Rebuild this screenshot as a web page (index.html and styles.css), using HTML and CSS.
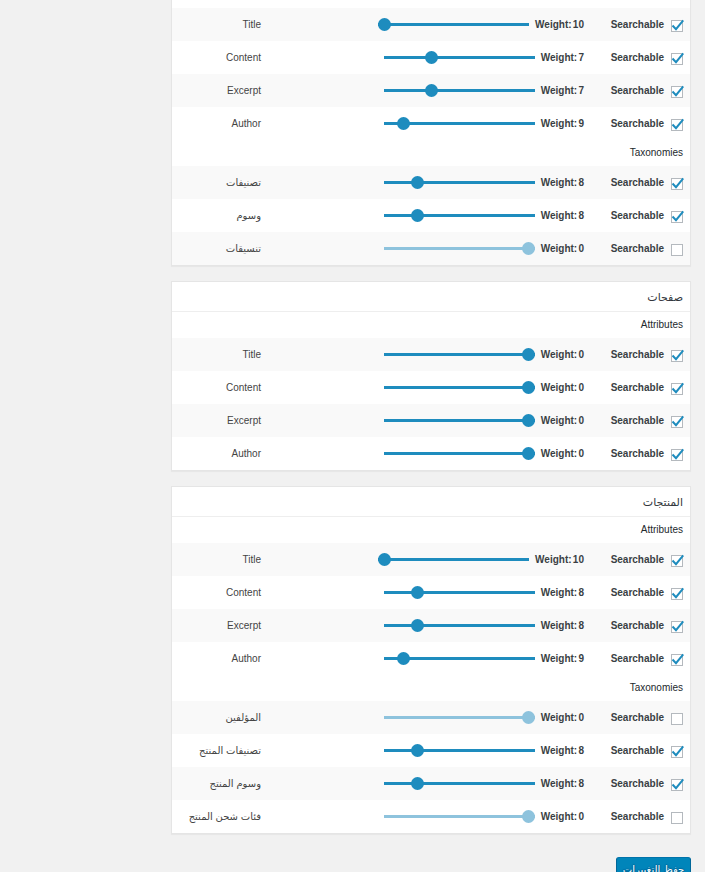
FILE: index.html
```html
<!DOCTYPE html>
<html lang="ar" dir="rtl">
<head>
<meta charset="utf-8">
<title>Search settings</title>
<link rel="stylesheet" href="styles.css">
</head>
<body>
<div class="wrap">
  <div class="panels">
    <section class="panel first">
      <h2 class="panel-title">مقالات</h2>
      <div class="group-label">Attributes</div>
      <div class="row">
        <label class="c-search"><span class="cb on"><svg viewBox="0 0 12 12" width="12" height="12"><path d="M2.2 6.2 L5 9.2 L11.6 1.2"/></svg></span><span class="s-text">Searchable</span></label>
        <div class="c-weight"><span class="w-text">Weight: 10</span><input class="slider" type="range" min="0" max="10" value="10"></div>
        <div class="c-label">Title</div>
      </div>
      <div class="row">
        <label class="c-search"><span class="cb on"><svg viewBox="0 0 12 12" width="12" height="12"><path d="M2.2 6.2 L5 9.2 L11.6 1.2"/></svg></span><span class="s-text">Searchable</span></label>
        <div class="c-weight"><span class="w-text">Weight: 7</span><input class="slider" type="range" min="0" max="10" value="7"></div>
        <div class="c-label">Content</div>
      </div>
      <div class="row">
        <label class="c-search"><span class="cb on"><svg viewBox="0 0 12 12" width="12" height="12"><path d="M2.2 6.2 L5 9.2 L11.6 1.2"/></svg></span><span class="s-text">Searchable</span></label>
        <div class="c-weight"><span class="w-text">Weight: 7</span><input class="slider" type="range" min="0" max="10" value="7"></div>
        <div class="c-label">Excerpt</div>
      </div>
      <div class="row">
        <label class="c-search"><span class="cb on"><svg viewBox="0 0 12 12" width="12" height="12"><path d="M2.2 6.2 L5 9.2 L11.6 1.2"/></svg></span><span class="s-text">Searchable</span></label>
        <div class="c-weight"><span class="w-text">Weight: 9</span><input class="slider" type="range" min="0" max="10" value="9"></div>
        <div class="c-label">Author</div>
      </div>
      <div class="group-label">Taxonomies</div>
      <div class="row">
        <label class="c-search"><span class="cb on"><svg viewBox="0 0 12 12" width="12" height="12"><path d="M2.2 6.2 L5 9.2 L11.6 1.2"/></svg></span><span class="s-text">Searchable</span></label>
        <div class="c-weight"><span class="w-text">Weight: 8</span><input class="slider" type="range" min="0" max="10" value="8"></div>
        <div class="c-label">تصنيفات</div>
      </div>
      <div class="row">
        <label class="c-search"><span class="cb on"><svg viewBox="0 0 12 12" width="12" height="12"><path d="M2.2 6.2 L5 9.2 L11.6 1.2"/></svg></span><span class="s-text">Searchable</span></label>
        <div class="c-weight"><span class="w-text">Weight: 8</span><input class="slider" type="range" min="0" max="10" value="8"></div>
        <div class="c-label">وسوم</div>
      </div>
      <div class="row">
        <label class="c-search"><span class="cb"></span><span class="s-text">Searchable</span></label>
        <div class="c-weight"><span class="w-text">Weight: 0</span><input class="slider" type="range" min="0" max="10" value="0" disabled></div>
        <div class="c-label">تنسيقات</div>
      </div>
    </section>

    <section class="panel">
      <h2 class="panel-title">صفحات</h2>
      <div class="group-label">Attributes</div>
      <div class="row">
        <label class="c-search"><span class="cb on"><svg viewBox="0 0 12 12" width="12" height="12"><path d="M2.2 6.2 L5 9.2 L11.6 1.2"/></svg></span><span class="s-text">Searchable</span></label>
        <div class="c-weight"><span class="w-text">Weight: 0</span><input class="slider" type="range" min="0" max="10" value="0"></div>
        <div class="c-label">Title</div>
      </div>
      <div class="row">
        <label class="c-search"><span class="cb on"><svg viewBox="0 0 12 12" width="12" height="12"><path d="M2.2 6.2 L5 9.2 L11.6 1.2"/></svg></span><span class="s-text">Searchable</span></label>
        <div class="c-weight"><span class="w-text">Weight: 0</span><input class="slider" type="range" min="0" max="10" value="0"></div>
        <div class="c-label">Content</div>
      </div>
      <div class="row">
        <label class="c-search"><span class="cb on"><svg viewBox="0 0 12 12" width="12" height="12"><path d="M2.2 6.2 L5 9.2 L11.6 1.2"/></svg></span><span class="s-text">Searchable</span></label>
        <div class="c-weight"><span class="w-text">Weight: 0</span><input class="slider" type="range" min="0" max="10" value="0"></div>
        <div class="c-label">Excerpt</div>
      </div>
      <div class="row">
        <label class="c-search"><span class="cb on"><svg viewBox="0 0 12 12" width="12" height="12"><path d="M2.2 6.2 L5 9.2 L11.6 1.2"/></svg></span><span class="s-text">Searchable</span></label>
        <div class="c-weight"><span class="w-text">Weight: 0</span><input class="slider" type="range" min="0" max="10" value="0"></div>
        <div class="c-label">Author</div>
      </div>
    </section>

    <section class="panel">
      <h2 class="panel-title">المنتجات</h2>
      <div class="group-label">Attributes</div>
      <div class="row">
        <label class="c-search"><span class="cb on"><svg viewBox="0 0 12 12" width="12" height="12"><path d="M2.2 6.2 L5 9.2 L11.6 1.2"/></svg></span><span class="s-text">Searchable</span></label>
        <div class="c-weight"><span class="w-text">Weight: 10</span><input class="slider" type="range" min="0" max="10" value="10"></div>
        <div class="c-label">Title</div>
      </div>
      <div class="row">
        <label class="c-search"><span class="cb on"><svg viewBox="0 0 12 12" width="12" height="12"><path d="M2.2 6.2 L5 9.2 L11.6 1.2"/></svg></span><span class="s-text">Searchable</span></label>
        <div class="c-weight"><span class="w-text">Weight: 8</span><input class="slider" type="range" min="0" max="10" value="8"></div>
        <div class="c-label">Content</div>
      </div>
      <div class="row">
        <label class="c-search"><span class="cb on"><svg viewBox="0 0 12 12" width="12" height="12"><path d="M2.2 6.2 L5 9.2 L11.6 1.2"/></svg></span><span class="s-text">Searchable</span></label>
        <div class="c-weight"><span class="w-text">Weight: 8</span><input class="slider" type="range" min="0" max="10" value="8"></div>
        <div class="c-label">Excerpt</div>
      </div>
      <div class="row">
        <label class="c-search"><span class="cb on"><svg viewBox="0 0 12 12" width="12" height="12"><path d="M2.2 6.2 L5 9.2 L11.6 1.2"/></svg></span><span class="s-text">Searchable</span></label>
        <div class="c-weight"><span class="w-text">Weight: 9</span><input class="slider" type="range" min="0" max="10" value="9"></div>
        <div class="c-label">Author</div>
      </div>
      <div class="group-label">Taxonomies</div>
      <div class="row">
        <label class="c-search"><span class="cb"></span><span class="s-text">Searchable</span></label>
        <div class="c-weight"><span class="w-text">Weight: 0</span><input class="slider" type="range" min="0" max="10" value="0" disabled></div>
        <div class="c-label">المؤلفين</div>
      </div>
      <div class="row">
        <label class="c-search"><span class="cb on"><svg viewBox="0 0 12 12" width="12" height="12"><path d="M2.2 6.2 L5 9.2 L11.6 1.2"/></svg></span><span class="s-text">Searchable</span></label>
        <div class="c-weight"><span class="w-text">Weight: 8</span><input class="slider" type="range" min="0" max="10" value="8"></div>
        <div class="c-label">تصنيفات المنتج</div>
      </div>
      <div class="row">
        <label class="c-search"><span class="cb on"><svg viewBox="0 0 12 12" width="12" height="12"><path d="M2.2 6.2 L5 9.2 L11.6 1.2"/></svg></span><span class="s-text">Searchable</span></label>
        <div class="c-weight"><span class="w-text">Weight: 8</span><input class="slider" type="range" min="0" max="10" value="8"></div>
        <div class="c-label">وسوم المنتج</div>
      </div>
      <div class="row">
        <label class="c-search"><span class="cb"></span><span class="s-text">Searchable</span></label>
        <div class="c-weight"><span class="w-text">Weight: 0</span><input class="slider" type="range" min="0" max="10" value="0" disabled></div>
        <div class="c-label">فئات شحن المنتج</div>
      </div>
    </section>
  </div>
  <p class="submit"><button class="button-primary" type="button">حفظ التغييرات</button></p>
</div>
</body>
</html>
```

FILE: styles.css
```css
html, body {
  margin: 0;
  padding: 0;
}
body {
  background: #f1f1f1;
  direction: rtl;
  font-family: "Liberation Sans", "DejaVu Sans", Arial, sans-serif;
  font-size: 10px;
  color: #444;
}
.wrap {
  margin: 0 14px 0 171px;
}
.panels {
  display: flex;
  flex-direction: column;
  gap: 15px;
}
.panel {
  background: #fff;
  border: 1px solid #e5e5e5;
  box-shadow: 0 1px 1px rgba(0, 0, 0, 0.04);
}
.panel.first {
  margin-top: -49px;
}
.panel-title {
  margin: 0;
  height: 29px;
  line-height: 31px;
  padding: 0 7px 0 0;
  border-bottom: 1px solid #eee;
  font-family: "DejaVu Sans", "Liberation Sans", sans-serif;
  font-size: 11px;
  font-weight: normal;
  color: #32373c;
}
.group-label {
  height: 26px;
  line-height: 26px;
  padding-right: 7px;
  color: #23282d;
}
.row {
  display: flex;
  align-items: center;
  height: 33px;
  padding-right: 7px;
}
.group-label + .row,
.group-label + .row + .row + .row,
.group-label + .row + .row + .row + .row + .row {
  background: #f9f9f9;
}
.c-search {
  width: 99px;
  flex: none;
  display: flex;
  align-items: center;
  gap: 7px;
}
.cb {
  width: 12px;
  height: 12px;
  box-sizing: border-box;
  border: 1px solid #b4b9be;
  background: #fff;
  margin-top: 2px;
  position: relative;
  flex: none;
}
.cb svg {
  position: absolute;
  left: -1px;
  top: -1px;
  overflow: visible;
}
.cb svg path {
  fill: none;
  stroke: #1e8cbe;
  stroke-width: 2;
  stroke-linecap: square;
}
.s-text,
.w-text {
  font-weight: bold;
  color: #3a3f44;
  white-space: nowrap;
}
.w-text {
  word-spacing: -1.5px;
}
.c-weight {
  width: 323px;
  flex: none;
  display: flex;
  align-items: center;
  gap: 6px;
}
.c-label {
  flex: 1;
  text-align: right;
  color: #444;
  font-family: "Liberation Sans", "DejaVu Sans", sans-serif;
  white-space: nowrap;
}
.slider {
  -webkit-appearance: none;
  appearance: none;
  direction: rtl;
  width: 151px;
  height: 13px;
  margin: 0;
  padding: 0;
  background: transparent;
  flex: none;
}
.slider::-webkit-slider-runnable-track {
  height: 3px;
  background: #1e8cbe;
  border: none;
}
.slider::-webkit-slider-thumb {
  -webkit-appearance: none;
  appearance: none;
  width: 13px;
  height: 13px;
  border-radius: 50%;
  background: #1e8cbe;
  border: none;
  margin-top: -5px;
}
.slider:disabled::-webkit-slider-runnable-track {
  background: #8ec3dd;
}
.slider:disabled::-webkit-slider-thumb {
  background: #8ec3dd;
}
.submit {
  margin: 23px 0 0;
  padding: 0;
  display: flex;
}
.button-primary {
  height: 28px;
  width: 75px;
  padding: 0 4px 2px;
  background: #0085ba;
  border: 1px solid #0073aa;
  border-color: #0073aa #006799 #006799;
  border-radius: 3px;
  box-shadow: 0 1px 0 #006799;
  color: #fff;
  text-shadow: 0 -1px 1px #006799, 1px 0 1px #006799, 0 1px 1px #006799, -1px 0 1px #006799;
  font-family: "DejaVu Sans", "Liberation Sans", sans-serif;
  font-size: 10px;
  line-height: 22px;
  white-space: nowrap;
  cursor: pointer;
}
```
